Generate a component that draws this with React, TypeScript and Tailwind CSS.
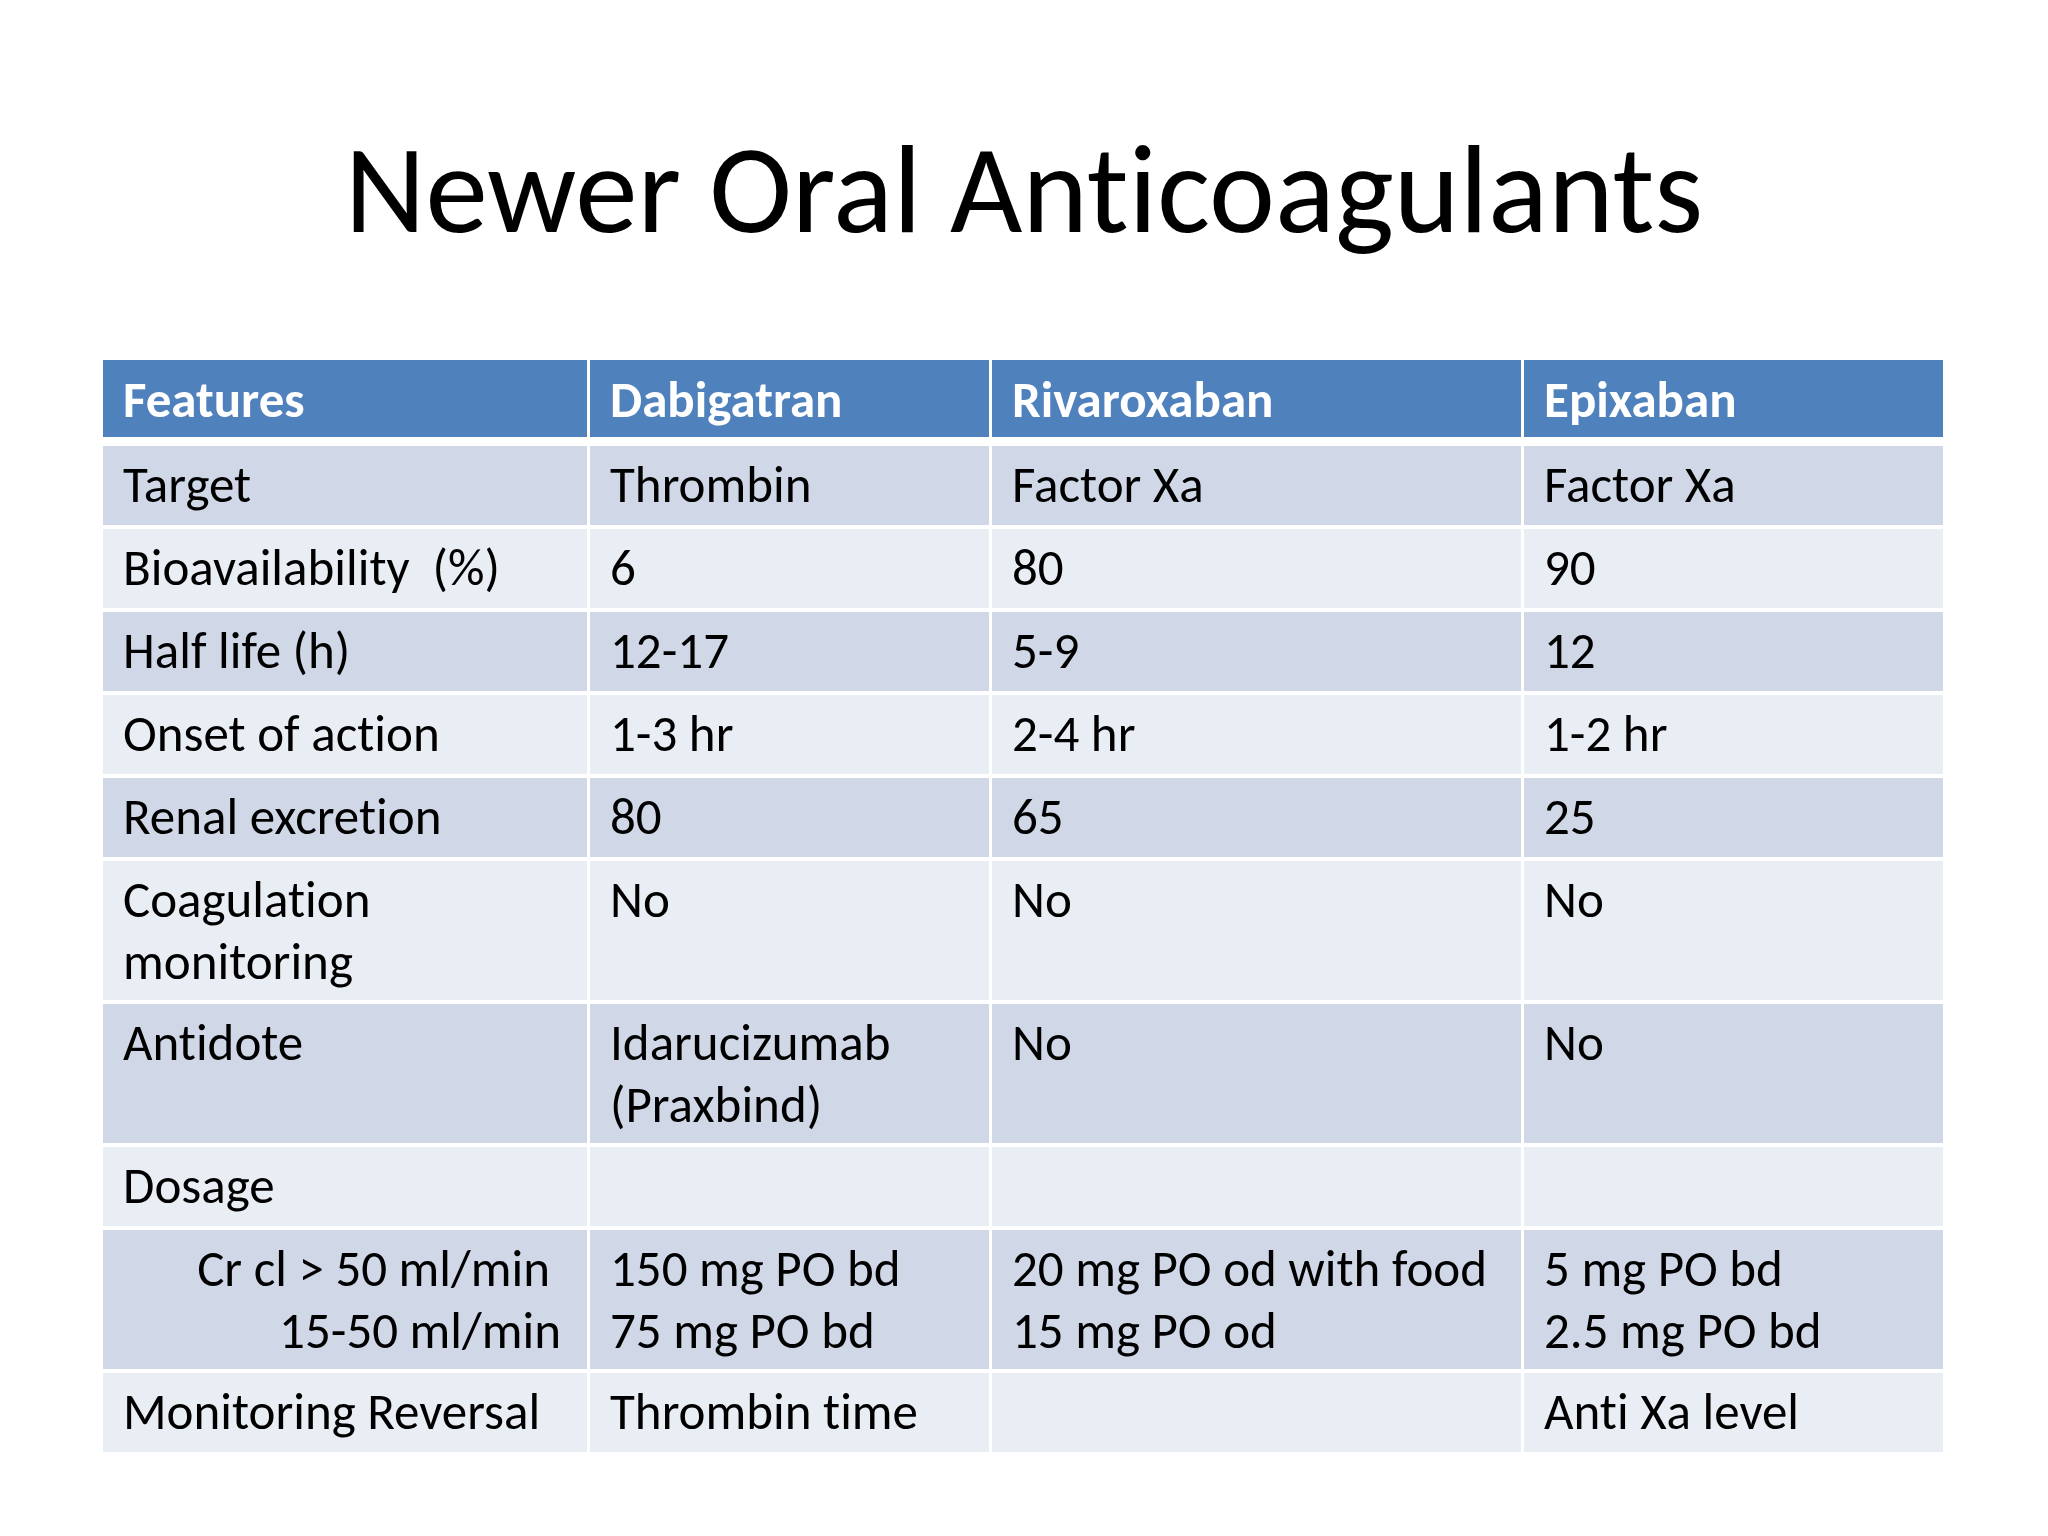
import React from "react";

type Row = { cells: React.ReactNode[]; band: "a" | "b"; tall?: boolean };

const rows: Row[] = [
  { cells: ["Target", "Thrombin", "Factor Xa", "Factor Xa"], band: "a" },
  { cells: ["Bioavailability\u00a0 (%)", "6", "80", "90"], band: "b" },
  { cells: ["Half life (h)", "12-17", "5-9", "12"], band: "a" },
  { cells: ["Onset of action", "1-3 hr", "2-4 hr", "1-2 hr"], band: "b" },
  { cells: ["Renal excretion", "80", "65", "25"], band: "a" },
  {
    cells: [
      <>
        Coagulation
        <br />
        monitoring
      </>,
      "No",
      "No",
      "No",
    ],
    band: "b",
    tall: true,
  },
  {
    cells: [
      "Antidote",
      <>
        Idarucizumab
        <br />
        (Praxbind)
      </>,
      "No",
      "No",
    ],
    band: "a",
    tall: true,
  },
  { cells: ["Dosage", "", "", ""], band: "b" },
  {
    cells: [
      <div className="flex flex-col items-end pr-[26px]">
        <span className="mr-[11px]">Cr cl &gt; 50 ml/min</span>
        <span>15-50 ml/min</span>
      </div>,
      <>
        150 mg PO bd
        <br />
        75 mg PO bd
      </>,
      <>
        20 mg PO od with food
        <br />
        15 mg PO od
      </>,
      <>
        5 mg PO bd
        <br />
        2.5 mg PO bd
      </>,
    ],
    band: "a",
    tall: true,
  },
  { cells: ["Monitoring Reversal", "Thrombin time", "", "Anti Xa level"], band: "b" },
];

const headers = ["Features", "Dabigatran", "Rivaroxaban", "Epixaban"];

export default function App() {
  return (
    <div className="w-[2048px] h-[1536px] bg-white font-['Carlito','Lato',sans-serif] [font-variant-ligatures:none] text-black overflow-hidden">
      <div className="h-[360px] flex flex-col items-center">
        <h1 className="mt-[115px] text-[125px] leading-[150px] font-normal tracking-normal">
          Newer Oral Anticoagulants
        </h1>
      </div>
      <div className="ml-[103px] w-[1841px] flex flex-col">
        <div className="grid grid-cols-[484px_399px_529px_419px] gap-x-[3px] h-[77px] mb-[9px]">
          {headers.map((h) => (
            <div
              key={h}
              className="bg-[#4f81bd] text-white font-bold text-[51px] leading-[62px] pl-[20px] pt-[9px]"
            >
              {h}
            </div>
          ))}
        </div>
        <div className="flex flex-col gap-y-[4px]">
          {rows.map((r, i) => (
            <div
              key={i}
              className={`grid grid-cols-[484px_399px_529px_419px] gap-x-[3px] ${
                r.tall ? "h-[139px]" : "h-[79px]"
              }`}
            >
              {r.cells.map((c, j) => (
                <div
                  key={j}
                  className={`${
                    r.band === "a" ? "bg-[#d0d8e8]" : "bg-[#e9edf4]"
                  } text-[51px] leading-[62px] pl-[20px] pt-[8px] whitespace-nowrap`}
                >
                  {c}
                </div>
              ))}
            </div>
          ))}
        </div>
      </div>
    </div>
  );
}
